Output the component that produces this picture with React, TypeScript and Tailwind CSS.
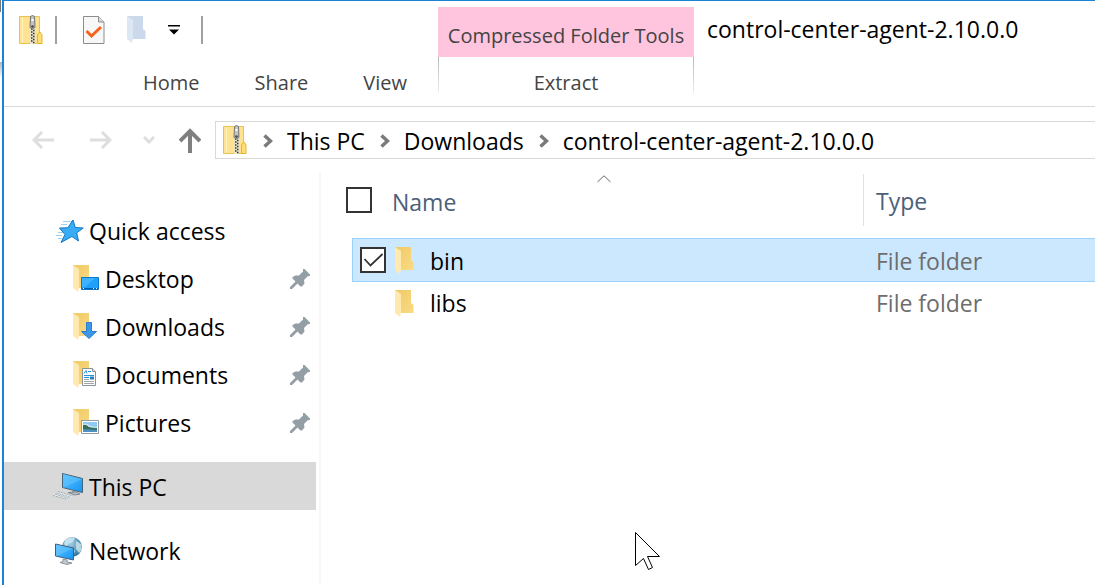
import { useState } from "react"
import type { ReactNode } from "react"

function ZipFolderIcon() {
  return (
    <svg width="24" height="30" viewBox="0 0 24 30" className="shrink-0">
      <path d="M.5 1.5h20v27H.5z" fill="#ffe391" stroke="#e9c250" />
      <path d="M3.5 2v26" stroke="#fff0bd" strokeWidth="1" />
      <path d="M18.5 28.5V20l1.500-2.500h1.500L23 20v8.500z" fill="#ffdc75" stroke="#e4b52f" />
      <path d="M11 13h5v16h-5z" fill="#e9e2c6" />
      <path d="M12 14h1.500M14 15.500h1.500M12 17h1.500M14 18.500h1.500M12 20h1.500M14 21.500h1.500M12 23h1.500M14 24.500h1.500M12 26h1.500M14 27.500h1.500" stroke="#333" strokeWidth="1.500" />
      <path d="M11.500 1.500Q13.500-.5 15.500 1.500l.5 11q-2.500 2.500-5 0z" fill="#c3c3c3" stroke="#747474" />
      <path d="M12.500 5h2" stroke="#fff" strokeWidth="2" />
      <circle cx="13.500" cy="11.500" r="1.300" fill="#444" />
    </svg>
  )
}

function FolderIcon() {
  return (
    <svg width="19" height="27" viewBox="0 0 19 27" className="shrink-0">
      <path d="M0 0h16v13l2.500 2v8H6L0 20z" fill="url(#folderBack)" />
      <path d="M0 0l6 4v18l-1 5L0 23z" fill="#ffe9ae" />
    </svg>
  )
}

function Gradients() {
  return (
    <svg width="0" height="0" className="absolute" aria-hidden="true">
      <defs>
        <linearGradient id="folderBack" x1="0" y1="0" x2="1" y2="1">
          <stop offset="0" stopColor="#eec965" />
          <stop offset="1" stopColor="#fadb85" />
        </linearGradient>
        <linearGradient id="screen" x1="0" y1="0" x2="1" y2="1">
          <stop offset="0" stopColor="#5cc0ff" />
          <stop offset=".5" stopColor="#38adfc" />
          <stop offset="1" stopColor="#1593ee" />
        </linearGradient>
        <radialGradient id="globe" cx=".4" cy=".3" r=".7">
          <stop offset="0" stopColor="#a9d5ec" />
          <stop offset="1" stopColor="#33759f" />
        </radialGradient>
      </defs>
    </svg>
  )
}

function ChildIcon({ children }: { children: ReactNode }) {
  return (
    <svg width="28" height="28" viewBox="0 0 28 28" className="shrink-0">
      <path d="M0 0h16v23H6L0 20z" fill="url(#folderBack)" />
      <path d="M0 0l6 4v18l-1 5L0 23z" fill="#ffe9ae" />
      {children}
    </svg>
  )
}

function DesktopIcon() {
  return (
    <ChildIcon>
      <path d="M8.500 12.500h17v12h-17z" fill="#1fa1fb" stroke="#0878ce" />
      <path d="M9 13h13L12 22H9z" fill="#3fb2ff" />
      <path d="M9 23.500h16" stroke="#045da5" />
      <path d="M10 23.500h1M20 23.500h1M23 23.500h1" stroke="#fff" />
    </ChildIcon>
  )
}

function DownloadsIcon() {
  return (
    <ChildIcon>
      <path d="M13.500 9.500h5v9h5L16 25.500 8.500 18.500h5z" fill="#3b97e8" stroke="#2b7fd0" />
    </ChildIcon>
  )
}

function DocumentsIcon() {
  return (
    <ChildIcon>
      <path d="M9.500 7.500h10l3 3v14h-13z" fill="#fff" stroke="#8b9298" />
      <path d="M19.500 7.500v3h3" fill="#ddd" stroke="#8b9298" />
      <path d="M11 12.500l2-3 1 3M15 10.500h3M11 14.500h10M11 16.500h5" fill="none" stroke="#2590de" />
      <path d="M17 15.500h4v3h-4z" fill="#287fbb" />
      <path d="M11 18.500h5M11 20.500h10M11 22.500h10" stroke="#a0a5a9" />
    </ChildIcon>
  )
}

function PicturesIcon() {
  return (
    <ChildIcon>
      <path d="M8.500 11.500h17v13h-17z" fill="#fff" stroke="#939ba1" />
      <path d="M10 13h14v10H10z" fill="#90c9f2" />
      <path d="M10 15q4-1 7 2 3 1 7 1v2H10z" fill="#d9edf2" />
      <path d="M10 16q3-1 6 2 4 1 8 1v2H10z" fill="#356f5e" />
      <path d="M10 20l14 1v2H10z" fill="#4e8fc4" />
    </ChildIcon>
  )
}

function QuickAccessIcon() {
  return (
    <svg width="32" height="28" viewBox="0 0 32 28" className="shrink-0">
      <path d="M10 4.500h11M8 7.500h6M5 15.500h6M3 18.500h6M5 21.500h4" stroke="#9ed2f5" />
      <path d="M20 3l2.300 7.500 8 .5-6.600 4.800 1.800 8.200-6.600-4.500L8 25.500l4-8-5.500-6.500 8.300-.2z" fill="#39acf6" stroke="#1478c4" />
    </svg>
  )
}

function ThisPcIcon() {
  return (
    <svg width="32" height="30" viewBox="0 0 32 30" className="shrink-0">
      <path d="M9.500 1.500l20 5v14l-20-5z" fill="url(#screen)" stroke="#436579" />
      <path d="M10 2l19 5-18 8.500-1-.3z" fill="#69c8ff" opacity=".5" />
      <path d="M19 19l5 1v2h-5z" fill="#889198" />
      <path d="M15 20.500l7 2.500 5-1-4-2z" fill="#b8c2c8" stroke="#7f898f" />
      <path d="M5 19.500l15 4.500-6 4L0 23z" fill="#e4e8ea" />
      <path d="M5 19.500l15 4.500M3.500 21l14.500 4.500M2 22l14 4.500M0 23.500l14 4" stroke="#a0abb1" strokeDasharray="2 1" />
    </svg>
  )
}

function NetworkIcon() {
  return (
    <svg width="32" height="30" viewBox="0 0 32 30" className="shrink-0">
      <circle cx="19" cy="11" r="10" fill="url(#globe)" />
      <path d="M12 4q5-4 10-2l-2 4-4 1-3 4-2-3zM23 5l5 3 1 6-3 3-3-4zM19 12l3 3-2 5-3-4z" fill="#d6edf2" opacity=".75" />
      <path d="M2.500 8l18 4v12l-18-4z" fill="url(#screen)" stroke="#3e5f76" />
      <path d="M3 8.500l17 4L4 20H3z" fill="#7bcfff" opacity=".4" />
      <path d="M10 23l4 1v2l5 1-5 1.500-7-2 3-1z" fill="#c3ccd1" stroke="#8b969d" />
    </svg>
  )
}

function PinIcon() {
  return (
    <svg width="20" height="20" viewBox="0 0 20 20" fill="#939fa5">
      <path d="M13 0h1.500L20 5.500V7h-2l-4 4 .5 3.500L12 17.500h-1.500L7.500 14.500 2 20H0v-2l5.500-5.500-3-3V8l3-1.500h3.500L13 2.500z" />
    </svg>
  )
}

function Chevron() {
  return (
    <svg width="10" height="14" viewBox="0 0 10 14" fill="none" stroke="#7a7a7a" strokeWidth="3.500">
      <path d="M1.500 1.500L7.500 7l-6 5.500" />
    </svg>
  )
}

function CheckBox({ label, checked, onChange }: { label: string; checked: boolean; onChange: () => void }) {
  return (
    <label className="relative block size-[26px]">
      <input
        type="checkbox"
        aria-label={label}
        checked={checked}
        onChange={onChange}
        className="block size-[26px] appearance-none border-2 border-[#333333] bg-white"
      />
      {checked && (
        <svg viewBox="0 0 26 26" className="pointer-events-none absolute inset-0" fill="none" stroke="#333" strokeWidth="1.800">
          <path d="M4.500 12l6 6.500L22.500 7" />
        </svg>
      )}
    </label>
  )
}

const pinned = [
  { name: "Desktop", icon: <DesktopIcon /> },
  { name: "Downloads", icon: <DownloadsIcon /> },
  { name: "Documents", icon: <DocumentsIcon /> },
  { name: "Pictures", icon: <PicturesIcon /> },
]

const path = ["This PC", "Downloads", "control-center-agent-2.10.0.0"]

function TitleBar() {
  return (
    <header className="flex border-b border-[#d9d9d9] text-xl text-[#444444]">
      <div className="w-[434px] shrink-0">
        <div className="flex h-[57px] items-center pl-[15px]">
          <ZipFolderIcon />
          <span className="ml-3 h-7 w-0.5 bg-[#a0a0a0]" />
          <button aria-label="Properties" className="ml-[26px]">
            <svg width="22" height="28" viewBox="0 0 22 28">
              <path d="M.5.5h15l5.500 5.500v21.500H.5z" fill="#f7f7f7" stroke="#8c8c8c" />
              <path d="M15.500.5V6H21" fill="#ddd" stroke="#8c8c8c" />
              <path d="M3.500 15l5 5L18 11" fill="none" stroke="#f9611b" strokeWidth="3" />
            </svg>
          </button>
          <button aria-label="New folder" className="ml-[22px]">
            <svg width="19" height="27" viewBox="0 0 19 27">
              <path d="M0 0h16v13l2.500 2v8H6L0 20z" fill="#ccd9ec" />
              <path d="M0 0l6 4v18l-1 5L0 23z" fill="#dde7f4" />
            </svg>
          </button>
          <button aria-label="Customize Quick Access Toolbar" className="ml-[22px]">
            <svg width="12" height="10" viewBox="0 0 12 10">
              <path d="M0 0h12v1.500H0zM1 4.500h10L6 9.500z" />
            </svg>
          </button>
          <span className="ml-[21px] h-7 w-0.5 bg-[#a0a0a0]" />
        </div>
        <nav className="flex h-12 items-center gap-[55px] pt-0.5 pl-[139px]">
          <button>Home</button>
          <button>Share</button>
          <button>View</button>
        </nav>
      </div>
      <div className="w-64 shrink-0 pt-1.5">
        <div className="flex h-[50px] items-center justify-center bg-[#ffc4de] pt-2 whitespace-nowrap">Compressed Folder Tools</div>
        <div className="flex h-[49px] justify-between">
          <span className="h-9 w-px bg-linear-to-b from-[#b8b8b8] to-[#eeeeee]" />
          <button className="pt-0.5">Extract</button>
          <span className="h-9 w-px bg-linear-to-b from-[#b8b8b8] to-[#eeeeee]" />
        </div>
      </div>
      <h1 className="min-w-0 flex-1 truncate pt-3 pl-[13px] text-[23px] leading-8 text-black">control-center-agent-2.10.0.0</h1>
    </header>
  )
}

function AddressBar() {
  return (
    <div className="flex items-center pt-3.5 pl-7">
      <button aria-label="Back">
        <svg width="22" height="18" viewBox="0 0 22 18" fill="none" stroke="#dedede" strokeWidth="3">
          <path d="M22 9H2M10 1L2 9l8 8" />
        </svg>
      </button>
      <button aria-label="Forward" className="ml-9">
        <svg width="22" height="18" viewBox="0 0 22 18" fill="none" stroke="#dedede" strokeWidth="3">
          <path d="M0 9h20M12 1l8 8-8 8" />
        </svg>
      </button>
      <button aria-label="Recent locations" className="ml-[31px]">
        <svg width="12" height="8" viewBox="0 0 12 8" fill="none" stroke="#dedede" strokeWidth="3">
          <path d="M1 1l5 5 5-5" />
        </svg>
      </button>
      <button aria-label="Up" className="ml-6">
        <svg width="22" height="25" viewBox="0 0 22 25" fill="none" stroke="#808080" strokeWidth="4">
          <path d="M11 25V3M1 13L11 3l10 10" />
        </svg>
      </button>
      <div className="ml-3.5 flex h-[38px] min-w-0 flex-1 items-center border border-r-0 border-[#d9d9d9] pl-[7px]">
        <ZipFolderIcon />
        <ol className="flex pt-0.5 pl-4">
          {path.map((part) => (
            <li key={part} className="flex items-center gap-3.5 pr-[15px]">
              <Chevron />
              <button className="whitespace-nowrap">{part}</button>
            </li>
          ))}
        </ol>
      </div>
    </div>
  )
}

function Sidebar() {
  return (
    <nav className="mt-3.5 w-[317px] shrink-0 border-r-2 border-[#f7f7f7] pt-[34px]">
      <a href="#quick-access" className="flex h-12 items-center gap-1 pl-[49px]">
        <QuickAccessIcon />
        Quick access
      </a>
      <ul>
        {pinned.map((item) => (
          <li key={item.name}>
            <a href={`#${item.name}`} className="flex h-12 items-center gap-1 pr-[9px] pl-[69px]">
              {item.icon}
              <span className="flex-1">{item.name}</span>
              <PinIcon />
            </a>
          </li>
        ))}
      </ul>
      <a href="#this-pc" className="mt-[15px] mr-[3px] flex h-12 items-center gap-1 bg-[#d9d9d9] pt-0.5 pl-[49px]">
        <ThisPcIcon />
        This PC
      </a>
      <a href="#network" className="mt-4 flex h-12 items-center gap-1 pt-0.5 pl-[49px]">
        <NetworkIcon />
        Network
      </a>
    </nav>
  )
}

function FileList() {
  const [selected, setSelected] = useState<string[]>(["bin"])
  const files = ["bin", "libs"]

  const toggle = (name: string) =>
    setSelected((prev) => (prev.includes(name) ? prev.filter((n) => n !== name) : [...prev, name]))

  return (
    <main className="min-w-0 flex-1 pt-3 pl-[25px]">
      <table className="w-full table-fixed border-separate border-spacing-0 text-left">
        <colgroup>
          <col className="w-1.5" />
          <col className="w-10" />
          <col className="w-[471px]" />
          <col />
        </colgroup>
        <thead className="text-[#4c607a]">
          <tr className="h-[67px]">
            <th colSpan={2} className="p-0 pb-2.5">
              <CheckBox
                label="Select all"
                checked={selected.length === files.length}
                onChange={() => setSelected(selected.length === files.length ? [] : files)}
              />
            </th>
            <th className="relative p-0 pb-1.5 font-normal">
              <svg width="14" height="8" viewBox="0 0 14 8" className="absolute top-1 left-[205px]" fill="none" stroke="#666">
                <path d="M.5 7L7 .8 13.500 7" />
              </svg>
              Name
            </th>
            <th className="p-0 pb-2.5 font-normal">
              <div className="flex h-[52px] items-center border-l border-[#e2e2e2] pt-0.5 pl-3">Type</div>
            </th>
          </tr>
        </thead>
        <tbody>
          {files.map((name) => {
            const on = selected.includes(name)
            const cell = on ? "h-11 border-y border-[#99d1ff] bg-[#cce8ff] p-0" : "h-[42px] p-0"
            const text = on ? "pt-0.5" : ""
            return (
              <tr key={name}>
                <td className="p-0" />
                <td className={on ? `${cell} border-l` : cell}>
                  <div className={on ? "pl-[7px]" : "pl-2 opacity-0"}>
                    <CheckBox label={`Select ${name}`} checked={on} onChange={() => toggle(name)} />
                  </div>
                </td>
                <td className={cell}>
                  <div className="flex items-center gap-4 pl-[3px]">
                    <FolderIcon />
                    <span className={text}>{name}</span>
                  </div>
                </td>
                <td className={cell}>
                  <div className={`pl-[13px] text-[#6d6d6d] ${text}`}>File folder</div>
                </td>
              </tr>
            )
          })}
        </tbody>
      </table>
    </main>
  )
}

export default function App() {
  return (
    <div className="relative flex min-h-screen overflow-hidden bg-white font-['Open_Sans','Noto_Sans',sans-serif] text-[23px] leading-8 text-black">
      <Gradients />
      <div className="w-0.5 shrink-0">
        <div className="h-3 w-px bg-[#777777]" />
        <div className="mt-[50px] h-4 bg-linear-to-b from-[#b5b5b5] to-white" />
      </div>
      <div className="flex min-w-0 flex-1 flex-col border-t border-l-2 border-[#1883d7]">
        <TitleBar />
        <AddressBar />
        <div className="flex flex-1">
          <Sidebar />
          <FileList />
        </div>
      </div>
      <svg width="26" height="40" viewBox="0 0 26 40" className="pointer-events-none absolute top-[532px] left-[635px]">
        <path d="M.5.5v33l8-7 5 11 4-2-5-11h12z" fill="#fff" stroke="#000" />
      </svg>
    </div>
  )
}
